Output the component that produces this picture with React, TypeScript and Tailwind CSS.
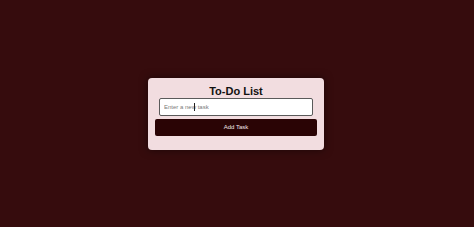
export default function App() {
  return (
    <div className="h-[227px] w-full bg-[#360c0d] flex items-center justify-center font-['Liberation_Sans',Arial,sans-serif]">
      <div className="w-[176px] -translate-x-[1px] rounded-[4px] bg-[#f2dde0] px-[7px] pt-[7px] pb-[14px] shadow-[0_0_8px_rgba(0,0,0,0.5)]">
        <h2 className="text-center text-[11px] leading-[13px] font-bold text-[#111]">To-Do List</h2>
        <div className="relative w-[154px] mx-auto">
          <input
            type="text"
            placeholder="Enter a new task"
            className="block w-full h-[18px] rounded-[2px] border border-[#5a5a5a] bg-white px-[4px] text-[6px] placeholder:text-[#7a7a7a] outline-none"
          />
          {/* mouse I-beam */}
          <span className="absolute left-[35px] top-[5px] h-[8px] w-[1px] bg-[#222]" />
        </div>
        <button className="mt-[3px] block w-[162px] h-[17px] rounded-[2px] bg-[#2a0405] text-[6px] text-[#f3e6e6]">
          Add Task
        </button>
      </div>
    </div>
  );
}
